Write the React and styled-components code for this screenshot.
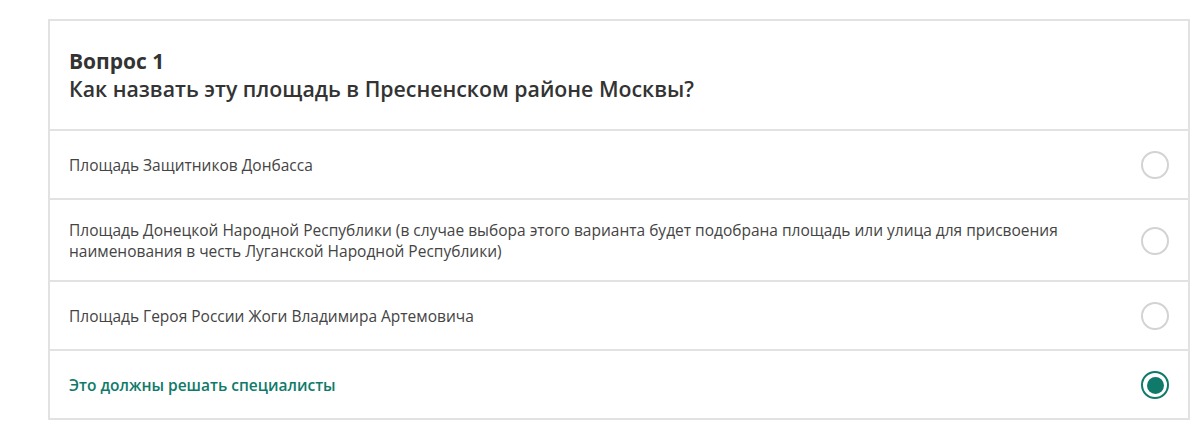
import React, { useState } from 'react';
import styled, { createGlobalStyle, css } from 'styled-components';

const GlobalStyle = createGlobalStyle`
  body {
    margin: 0;
    background: #fff;
    font-family: 'Open Sans', 'Noto Sans', sans-serif;
    color: #333;
  }
`;

const Page = styled.div`
  padding: 19px 0 0 48px;
`;

const Card = styled.section`
  width: 1142px;
  box-sizing: border-box;
  border: 2px solid #e2e2e2;
`;

const Header = styled.header`
  padding: 26px 20px 26px 19px;
  border-bottom: 2px solid #e2e2e2;
`;

const Label = styled.h2`
  margin: 0;
  font-size: 21px;
  line-height: 28px;
  font-weight: 700;
  color: #333;
`;

const Question = styled.h3`
  margin: 0;
  font-size: 21.3px;
  line-height: 28px;
  font-weight: 600;
  color: #333;
`;

const Option = styled.label`
  display: flex;
  align-items: center;
  justify-content: space-between;
  gap: 40px;
  padding: 20px 19px 19px 19px;
  cursor: pointer;

  & + & {
    border-top: 2px solid #e2e2e2;
  }
`;

const OptionText = styled.span`
  max-width: 1040px;
  font-size: 15.5px;
  line-height: 20.5px;
  color: #444;

  ${({ checked }) =>
    checked &&
    css`
      color: #0f7a6a;
      font-weight: 600;
    `}
`;

const Radio = styled.span`
  flex: none;
  width: 28px;
  height: 28px;
  box-sizing: border-box;
  border-radius: 50%;
  border: 2px solid ${({ checked }) => (checked ? '#0f7a6a' : '#d3d3d3')};
  display: flex;
  align-items: center;
  justify-content: center;

  &::after {
    content: '';
    width: 17px;
    height: 17px;
    border-radius: 50%;
    background: ${({ checked }) => (checked ? '#0f7a6a' : 'transparent')};
  }
`;

const options = [
  'Площадь Защитников Донбасса',
  'Площадь Донецкой Народной Республики (в случае выбора этого варианта будет подобрана площадь или улица для присвоения наименования в честь Луганской Народной Республики)',
  'Площадь Героя России Жоги Владимира Артемовича',
  'Это должны решать специалисты',
];

const App = () => {
  const [selected, setSelected] = useState(3);

  return (
    <Page>
      <GlobalStyle />
      <Card>
        <Header>
          <Label>Вопрос 1</Label>
          <Question>Как назвать эту площадь в Пресненском районе Москвы?</Question>
        </Header>
        {options.map((text, i) => (
          <Option key={text} onClick={() => setSelected(i)}>
            <OptionText checked={selected === i}>{text}</OptionText>
            <Radio checked={selected === i} />
          </Option>
        ))}
      </Card>
    </Page>
  );
};

export default App;
